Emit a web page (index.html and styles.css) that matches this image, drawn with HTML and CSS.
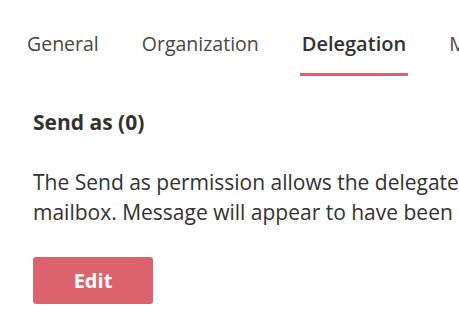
FILE: index.html
```html
<!DOCTYPE html>
<html lang="en">

<head>
    <meta charset="UTF-8">
    <meta name="viewport" content="width=device-width, initial-scale=1.0">
    <title>Mailbox :- Delegation</title>
    <link rel="stylesheet" href="styles.css">
</head>

<body>
    <nav class="tabs">
        <span class="tab">General</span>
        <span class="tab">Organization</span>
        <span class="tab active">Delegation</span>
        <span class="tab">Mailbox</span>
    </nav>

    <div class="section">
        <h3>Send as (0)</h3>
        <p>The Send as permission allows the delegate to send email from this mailbox. Message will appear to have been sent by the mailbox owner.</p>
        <button class="btn">Edit</button>
    </div>
</body>

</html>
```

FILE: styles.css
```css
body{margin: 0px; font-family: "Open Sans", "Noto Sans", sans-serif; color: #323130; background: #fff; overflow: hidden; width: 459px; height: 310px;}

.tabs{display: flex; gap: 39px; padding: 30px 0px 0px 25px; white-space: nowrap;}
.tab{font-size: 19.5px; color: #484644; padding: 0px 2px 15px; border-bottom: 3px solid transparent; line-height: 28px;}
.tab.active{font-size: 20px; font-weight: 600; color: #323130; border-bottom-color: #dc5f6b;}

.section{padding: 0px 0px 0px 33px; white-space: nowrap;}
.section h3{font-size: 21px; font-weight: 700; margin: 32px 0px 0px; line-height: 28px;}
.section p{font-size: 21px; margin: 31px 0px 0px; line-height: 30px; white-space: normal; width: 740px;}

.btn{
    width: 120px;
    height: 47px;
    margin: 30px 0px 0px;
    border: none;
    border-radius: 3px;
    background: #dc626d;
    color: #fff;
    font-family: inherit;
    font-size: 20px;
    font-weight: 700;
    display: block;
}
```
